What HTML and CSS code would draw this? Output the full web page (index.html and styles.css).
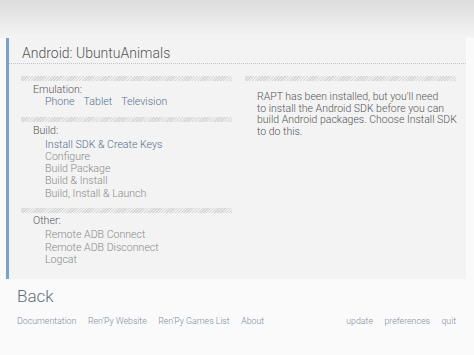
FILE: index.html
```html
<!DOCTYPE html>
<html>
<head>
    <meta charset="UTF-8">
    <title>Ren'Py Launcher</title>
    <link rel="stylesheet" href="styles.css">
</head>
<body>
    <div class="top"></div>
    <div class="panel">
        <h1 class="title">Android: UbuntuAnimals</h1>
        <div class="columns">
            <div class="left">
                <div class="section">
                    <div class="hatch"></div>
                    <div class="label">Emulation:</div>
                    <div class="items inline">
                        <a class="blue">Phone</a>
                        <a class="blue">Tablet</a>
                        <a class="blue">Television</a>
                    </div>
                </div>
                <div class="section">
                    <div class="hatch"></div>
                    <div class="label">Build:</div>
                    <div class="items">
                        <a class="blue">Install SDK &amp; Create Keys</a>
                        <a>Configure</a>
                        <a>Build Package</a>
                        <a>Build &amp; Install</a>
                        <a>Build, Install &amp; Launch</a>
                    </div>
                </div>
                <div class="section">
                    <div class="hatch"></div>
                    <div class="label">Other:</div>
                    <div class="items">
                        <a>Remote ADB Connect</a>
                        <a>Remote ADB Disconnect</a>
                        <a>Logcat</a>
                    </div>
                </div>
            </div>
            <div class="right">
                <div class="hatch"></div>
                <p class="info">RAPT has been installed, but you'll need<br>to install the Android SDK before you can<br>build Android packages. Choose Install SDK<br>to do this.</p>
            </div>
        </div>
    </div>
    <div class="footer">
        <a class="back">Back</a>
        <div class="links">
            <div class="group">
                <a>Documentation</a>
                <a>Ren'Py Website</a>
                <a>Ren'Py Games List</a>
                <a>About</a>
            </div>
            <div class="group">
                <a>update</a>
                <a>preferences</a>
                <a>quit</a>
            </div>
        </div>
    </div>
</body>
</html>
```

FILE: styles.css
```css
body {
    margin: 0;
    background-color: #fafafa;
    font-family: Roboto, "Liberation Sans", sans-serif;
    font-weight: 300;
    color: #555;
}
.top {
    height: 38px;
    background: linear-gradient(#dcdcdc, #f4f4f4);
}
.panel {
    margin: 0 8px 0 6px;
    height: 241px;
    border-left: 3px solid #76a3cb;
    background-color: #f3f3f3;
}
.title {
    margin: 0;
    padding: 7px 0 1px 13px;
    font-size: 14px;
    font-weight: 300;
    line-height: 17px;
    color: #555;
    border-bottom: 1px dotted #c4c4c4;
}
.columns {
    display: flex;
    gap: 13px;
    padding: 12px 0 0 12px;
}
.left {
    width: 211px;
}
.right {
    width: 211px;
}
.hatch {
    height: 5px;
    background: repeating-linear-gradient(135deg, #d6d6d6 0 1px, #efefef 1px 2px);
}
.section {
    margin-bottom: 8px;
}
.label {
    padding: 1.5px 0 0 12px;
    font-size: 10.6px;
    line-height: 13px;
    color: #555;
}
.items {
    display: flex;
    flex-direction: column;
    padding: 2px 0 0 24px;
    font-size: 10.6px;
    line-height: 12.3px;
    color: #8a8a8a;
}
.items.inline {
    flex-direction: row;
    gap: 9px;
    padding-top: 0;
    padding-bottom: 1px;
    line-height: 12.5px;
}
.blue {
    color: #56708c;
}
.info {
    margin: 0;
    padding: 9.8px 0 0 12px;
    font-size: 10.5px;
    line-height: 11.7px;
    white-space: nowrap;
    color: #555;
}
.footer {
    padding: 7.3px 18px 0 17px;
}
.back {
    display: block;
    font-size: 17px;
    line-height: 20px;
    color: #5c6e80;
}
.links {
    display: flex;
    justify-content: space-between;
    margin-top: 9.5px;
    font-size: 8.8px;
    line-height: 11px;
    color: #7d8c9c;
}
.group {
    display: flex;
    gap: 11.5px;
}
```
